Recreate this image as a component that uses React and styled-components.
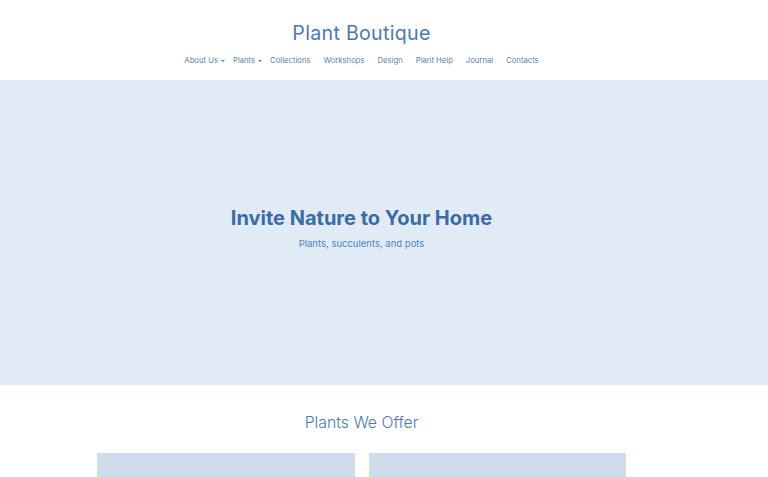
import React from 'react';
import styled, { createGlobalStyle } from 'styled-components';

const GlobalStyle = createGlobalStyle`
    * { box-sizing: border-box; }
    body {
        margin: 0;
        background: #ffffff;
        font-family: Inter, "Open Sans", sans-serif;
    }
`

const Inner = styled.div`
    width: 723px;
    display: flex;
    flex-direction: column;
    align-items: center;
`
const Header = styled.header`
    height: 80px;
    background: #ffffff;
`
const HeaderInner = styled(Inner)`
    padding-top: 21px;
`
const Logo = styled.h1`
    margin: 0;
    font-size: 19.6px;
    font-weight: 400;
    line-height: 24px;
    color: #4a78b5;
    letter-spacing: 0.3px;
`
const Nav = styled.nav`
    display: flex;
    align-items: center;
    margin-top: 10px;
`
const NavItem = styled.a`
    display: flex;
    align-items: center;
    font-size: 7.7px;
    line-height: 12px;
    color: #5f7fb3;
    text-decoration: none;
    margin-right: ${({ dropdown }) => (dropdown ? '8px' : '13px')};
    &:last-child { margin-right: 0; }
`
const Caret = styled.span`
    width: 0;
    height: 0;
    margin-left: 3px;
    border-left: 2px solid transparent;
    border-right: 2px solid transparent;
    border-top: 2.5px solid #5f7fb3;
`
const Hero = styled.section`
    height: 305px;
    background: #e1ebf5;
`
const HeroInner = styled(Inner)`
    height: 100%;
    justify-content: center;
    padding-bottom: 8px;
`
const HeroTitle = styled.h2`
    margin: 0;
    font-size: 20px;
    font-weight: 700;
    line-height: 24px;
    color: #3a6ba8;
`
const HeroSub = styled.p`
    margin: 7px 0 0;
    font-size: 9.5px;
    line-height: 14px;
    color: #4a85c5;
`
const Offer = styled(Inner)`
    padding-top: 27px;
`
const SectionTitle = styled.h3`
    margin: 0;
    font-size: 15.8px;
    font-weight: 300;
    line-height: 22px;
    color: #4a78b5;
`
const Cards = styled.div`
    display: grid;
    grid-template-columns: 258px 257px;
    gap: 14px;
    margin-top: 19px;
`
const Card = styled.div`
    height: 120px;
    background: #cfdcec;
`

const navLinks = [
    { label: 'About Us', dropdown: true },
    { label: 'Plants', dropdown: true },
    { label: 'Collections' },
    { label: 'Workshops' },
    { label: 'Design' },
    { label: 'Plant Help' },
    { label: 'Journal' },
    { label: 'Contacts' },
];

const App = () => {
    return (
        <>
            <GlobalStyle />
            <Header>
                <HeaderInner>
                    <Logo>Plant Boutique</Logo>
                    <Nav>
                        {navLinks.map(({ label, dropdown }) => (
                            <NavItem key={label} href="#" dropdown={dropdown ? 1 : 0}>
                                {label}
                                {dropdown && <Caret />}
                            </NavItem>
                        ))}
                    </Nav>
                </HeaderInner>
            </Header>
            <Hero>
                <HeroInner>
                    <HeroTitle>Invite Nature to Your Home</HeroTitle>
                    <HeroSub>Plants, succulents, and pots</HeroSub>
                </HeroInner>
            </Hero>
            <Offer>
                <SectionTitle>Plants We Offer</SectionTitle>
                <Cards>
                    <Card />
                    <Card />
                </Cards>
            </Offer>
        </>
    )
}

export default App;
